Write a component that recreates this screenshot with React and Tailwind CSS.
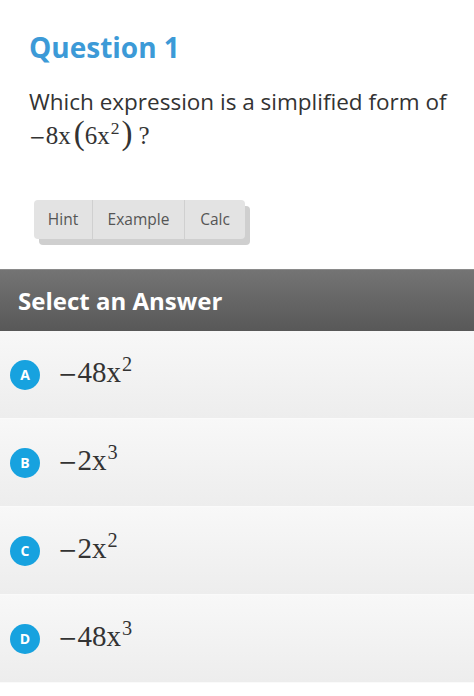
const ANSWERS = [
  { letter: 'A', base: '48x', exp: '2' },
  { letter: 'B', base: '2x', exp: '3' },
  { letter: 'C', base: '2x', exp: '2' },
  { letter: 'D', base: '48x', exp: '3' },
];

const SANS = { fontFamily: '"Open Sans", "Noto Sans", sans-serif' };
const SERIF = { fontFamily: '"Liberation Serif", "DejaVu Serif", serif' };
const MINUS = { fontFamily: '"DejaVu Serif", serif' };

function Minus() {
  return <span className="text-[0.8em]" style={MINUS}>−</span>;
}

function Power({ base, exp, className }) {
  return (
    <span className={className} style={SERIF}>
      <Minus />
      {base}
      <sup className="text-[0.7em] top-[-0.55em] ml-[1px]">{exp}</sup>
    </span>
  );
}

export default function App() {
  return (
    <div className="w-[474px] h-[696px] bg-white overflow-hidden" style={SANS}>
      {/* question */}
      <div className="pl-[29px] pr-[10px] pt-[27px]">
        <h1 className="text-[28px] font-bold text-[#3c9ad7] leading-[40px]">Question 1</h1>
        <p className="mt-[20px] text-[22.5px] text-[#333] leading-[30px] whitespace-nowrap">
          Which expression is a simplified form of
        </p>
        <p className="text-[25px] text-[#333] leading-[32px]" style={SERIF}>
          <Minus />8x<span className="text-[33px] ml-[3px]">(</span>6x
          <sup className="text-[0.7em] top-[-0.6em] ml-[1px]">2</sup>
          <span className="text-[33px] ml-[2px]">)</span>
          <span className="ml-[6px]">?</span>
        </p>
      </div>

      {/* tool buttons */}
      <div className="pl-[34px] mt-[47px]">
        <div className="inline-flex rounded-[4px] bg-[#e3e3e3] shadow-[5px_6px_0_#cfcfcf] text-[15.5px] text-[#555]">
          <button className="w-[59px] h-[39px] border-r border-[#d0d0d0]">Hint</button>
          <button className="w-[92px] h-[39px] border-r border-[#d0d0d0]">Example</button>
          <button className="w-[60px] h-[39px]">Calc</button>
        </div>
      </div>

      {/* answers */}
      <div className="mt-[30px]">
        <div className="h-[62px] flex items-center px-[18px] bg-gradient-to-b from-[#747474] to-[#585858] border-t border-[#8a8a8a]">
          <span className="text-[24px] font-bold text-white">Select an Answer</span>
        </div>
        {ANSWERS.map((a) => (
          <div
            key={a.letter}
            className="h-[88px] flex items-center gap-[18px] pl-[10px] bg-gradient-to-b from-[#f8f8f8] to-[#ededed] border-b border-[#fafafa]"
          >
            <span className="w-[30px] h-[30px] rounded-full bg-[#17a2df] text-white text-[14px] font-bold flex items-center justify-center">
              {a.letter}
            </span>
            <Power base={a.base} exp={a.exp} className="text-[29px] text-[#333] -mt-[4px] leading-none" />
          </div>
        ))}
      </div>
    </div>
  );
}
